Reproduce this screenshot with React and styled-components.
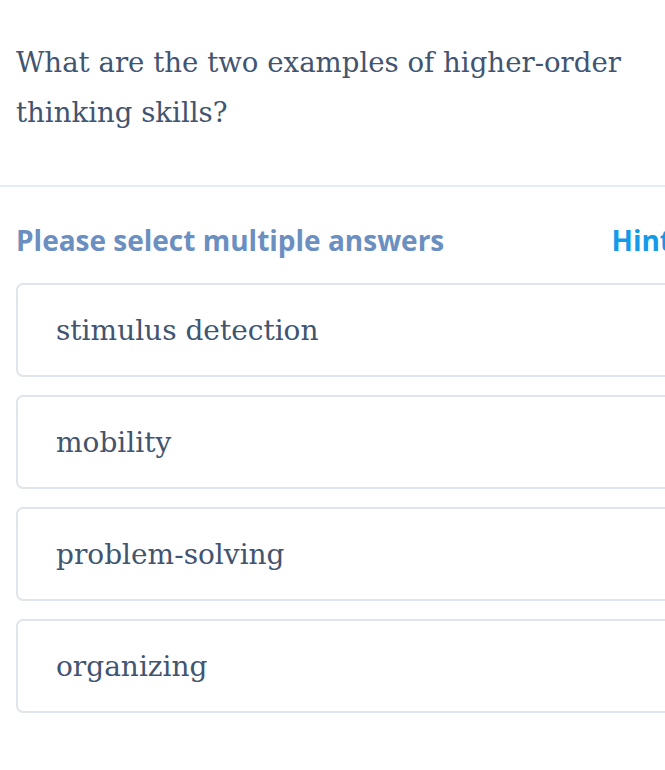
import React from 'react';
import styled, { createGlobalStyle } from 'styled-components';

const GlobalStyle = createGlobalStyle`
  html, body {
    margin: 0;
    padding: 0;
    background: #fff;
    overflow: hidden;
  }
`;

const Page = styled.div`
  width: 700px;
  padding-top: 38px;
`;

const Question = styled.h1`
  margin: 0;
  padding: 0 16px;
  font-family: "DejaVu Serif", "Liberation Serif", serif;
  font-weight: 400;
  font-size: 27.6px;
  line-height: 50px;
  color: #42546f;
`;

const Divider = styled.hr`
  margin: 47px 0 0;
  border: 0;
  height: 2px;
  background: #e4edf7;
`;

const Header = styled.div`
  display: flex;
  justify-content: space-between;
  align-items: center;
  padding: 0 0 0 16px;
  width: 700px;
  box-sizing: border-box;
  margin-top: 36px;
  font-family: "Open Sans", "Noto Sans", sans-serif;
  font-weight: 700;
  font-size: 28px;
  line-height: 34px;
`;

const Instruction = styled.span`
  color: #6a8fc0;
`;

const Hint = styled.span`
  color: #139ae9;
  margin-right: 28px;
`;

const List = styled.div`
  display: flex;
  flex-direction: column;
  gap: 18px;
  margin-top: 26px;
  padding-left: 16px;
`;

const Option = styled.div`
  height: 94px;
  box-sizing: border-box;
  width: 700px;
  border: 2px solid #dfe5ea;
  border-radius: 7px;
  display: flex;
  align-items: center;
  padding-left: 38px;
  font-family: "DejaVu Serif", "Liberation Serif", serif;
  font-size: 28px;
  color: #42546f;
`;

const options = ['stimulus detection', 'mobility', 'problem-solving', 'organizing'];

export default function App() {
  return (
    <>
      <GlobalStyle />
      <Page>
        <Question>What are the two examples of higher-order thinking skills?</Question>
        <Divider />
        <Header>
          <Instruction>Please select multiple answers</Instruction>
          <Hint>Hint</Hint>
        </Header>
        <List>
          {options.map((o) => (
            <Option key={o}>{o}</Option>
          ))}
        </List>
      </Page>
    </>
  );
}
